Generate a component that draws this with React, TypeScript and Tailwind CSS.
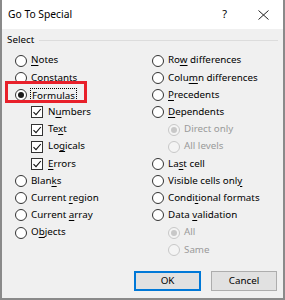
import React from "react";

type Item = { label: React.ReactNode; kind: "radio" | "check"; checked?: boolean; sub?: boolean; disabled?: boolean; focus?: boolean };

function u(text: string, i: number) {
    return <>{text.slice(0, i)}<span className="underline underline-offset-[2px]">{text[i]}</span>{text.slice(i + 1)}</>;
}

function Radio({ checked, disabled }: { checked?: boolean; disabled?: boolean }) {
    return (
        <span className={"flex h-[12px] w-[12px] shrink-0 items-center justify-center rounded-full border " + (disabled ? "border-[#c8c8c8] bg-[#f4f4f4]" : "border-[#333] bg-white")}>
            {checked && <span className={"h-[6px] w-[6px] rounded-full " + (disabled ? "bg-[#c8c8c8]" : "bg-[#1a1a1a]")} />}
        </span>
    );
}

function Check() {
    return (
        <span className="flex h-[12px] w-[12px] shrink-0 items-center justify-center border border-[#333] bg-white">
            <svg width="10" height="10" viewBox="0 0 10 10">
                <path d="M1.5 5.2 L4 7.7 L8.8 2" fill="none" stroke="#111" strokeWidth="1.1" />
            </svg>
        </span>
    );
}

function Row({ item }: { item: Item }) {
    return (
        <div className={"flex h-[17.2px] items-center " + (item.sub ? "pl-[16px]" : "")}>
            {item.kind === "radio" ? <Radio checked={item.checked} disabled={item.disabled} /> : <Check />}
            <span className={(item.kind === "check" ? "ml-[4px] " : "ml-[3px] ") + (item.disabled ? "text-[#9a9a9a] " : "text-black ") + (item.focus ? "border border-dotted border-black px-[1px] leading-[13px]" : "px-[1px]")}>
                {item.label}
            </span>
        </div>
    );
}

const left: Item[] = [
    { label: u("Notes", 0), kind: "radio" },
    { label: u("Constants", 1), kind: "radio" },
    { label: u("Formulas", 0), kind: "radio", checked: true, focus: true },
    { label: u("Numbers", 1), kind: "check", sub: true },
    { label: u("Text", 2), kind: "check", sub: true },
    { label: u("Logicals", 2), kind: "check", sub: true },
    { label: u("Errors", 0), kind: "check", sub: true },
    { label: u("Blanks", 4), kind: "radio" },
    { label: u("Current region", 8), kind: "radio" },
    { label: u("Current array", 8), kind: "radio" },
    { label: u("Objects", 1), kind: "radio" },
];

const right: Item[] = [
    { label: u("Row differences", 2), kind: "radio" },
    { label: u("Column differences", 4), kind: "radio" },
    { label: u("Precedents", 0), kind: "radio" },
    { label: u("Dependents", 0), kind: "radio" },
    { label: "Direct only", kind: "radio", sub: true, disabled: true, checked: true },
    { label: "All levels", kind: "radio", sub: true, disabled: true },
    { label: u("Last cell", 2), kind: "radio" },
    { label: u("Visible cells only", 17), kind: "radio" },
    { label: u("Conditional formats", 5), kind: "radio" },
    { label: u("Data validation", 5), kind: "radio" },
    { label: "All", kind: "radio", sub: true, disabled: true, checked: true },
    { label: "Same", kind: "radio", sub: true, disabled: true },
];

export default function App() {
    return (
        <div className="relative h-[300px] w-[285px] overflow-hidden border-x-2 border-b-2 border-[#8a8a8a] bg-[#f0f0f0] text-[9.8px] text-black" style={{ fontFamily: '"Segoe UI", "Noto Sans", sans-serif' }}>
            <div className="flex h-[29px] items-center bg-white pl-[6px]">
                <span className="flex-1 text-[10.3px]">Go To Special</span>
                <span className="mr-[31px] text-[11px]">?</span>
                <svg className="mr-[14px]" width="11" height="10" viewBox="0 0 11 10">
                    <path d="M0.5 0.5 L10.5 9.5 M10.5 0.5 L0.5 9.5" stroke="#222" strokeWidth="1" />
                </svg>
            </div>
            <div className="flex h-[23.2px] items-center pl-[5px] pr-[5px]">
                <span>Select</span>
                <span className="ml-[5px] h-px flex-1 bg-[#dcdcdc]" />
            </div>
            <div className="flex">
                <div className="w-[150px] pl-[13px]">
                    {left.map((it, i) => <Row key={i} item={it} />)}
                </div>
                <div className="flex-1">
                    {right.map((it, i) => <Row key={i} item={it} />)}
                </div>
            </div>
            <div className="mt-[13px] flex justify-end gap-[10px] pr-[6px]">
                <button className="h-[20px] w-[67px] border-2 border-[#0078d7] bg-[#e1e1e1]">OK</button>
                <button className="h-[20px] w-[66px] border border-[#adadad] bg-[#e1e1e1]">Cancel</button>
            </div>
            <div className="absolute left-[3px] top-[81px] h-[22px] w-[82px] border-[3px] border-[#e8202a]" />
        </div>
    );
}
